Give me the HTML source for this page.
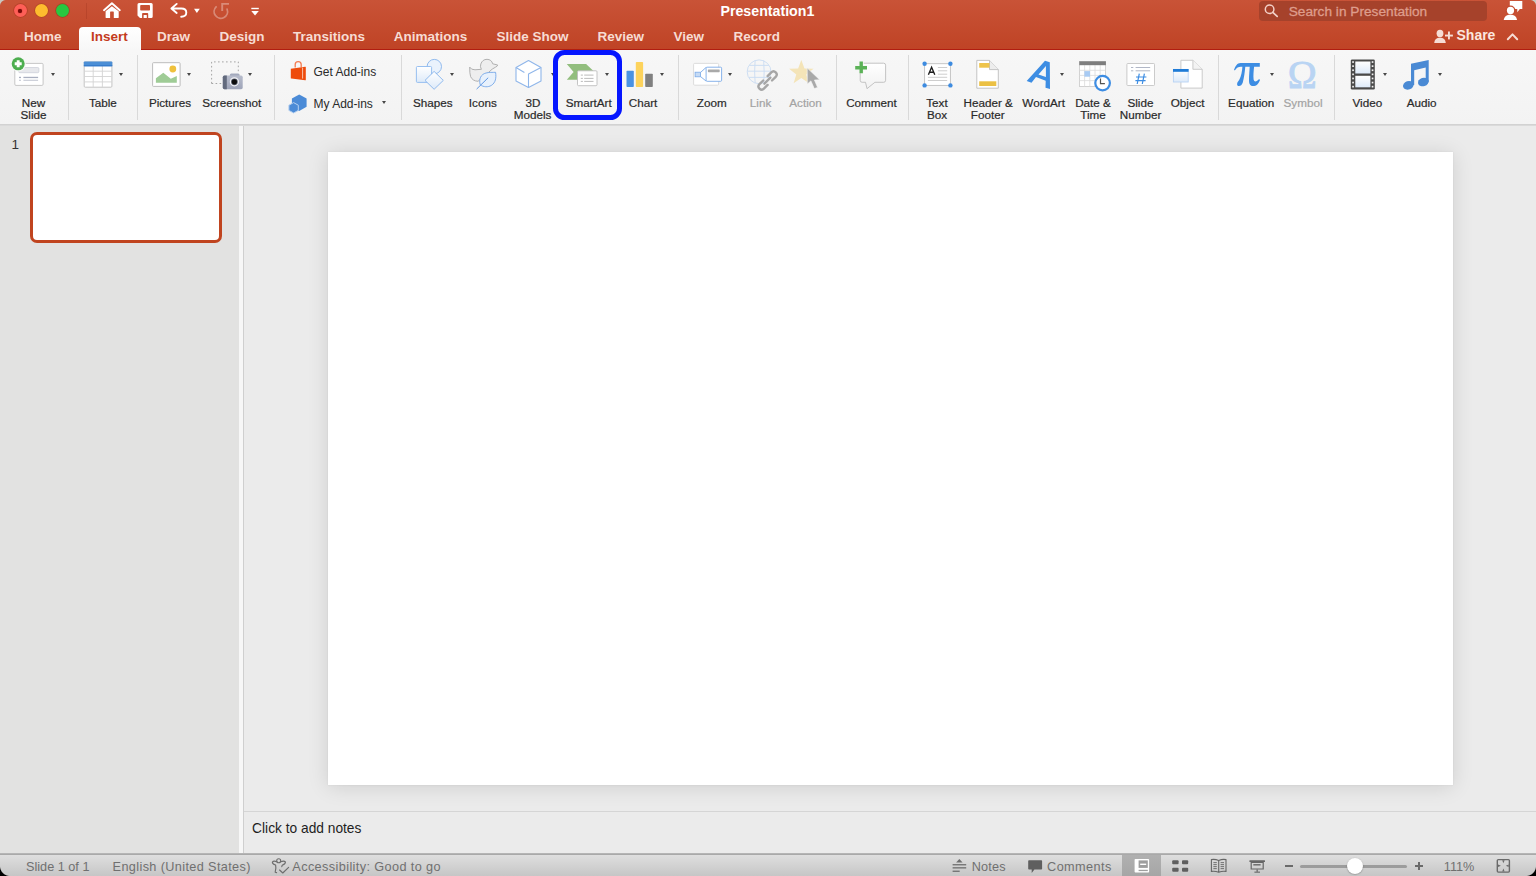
<!DOCTYPE html>
<html><head><meta charset="utf-8">
<style>
*{margin:0;padding:0;box-sizing:border-box}
html,body{width:1536px;height:876px;overflow:hidden;background:#EBEBEB;font-family:"Liberation Sans",sans-serif}
.abs{position:absolute}
#title{left:0;top:0;width:1536px;height:50px;background:linear-gradient(#C95337,#BF4325);}
#title .line{left:0;top:49px;width:1536px;height:1px;background:#B11D10}
.tab{position:absolute;top:29.6px;font-size:13.5px;font-weight:bold;line-height:13.5px;color:#F7DCD3;white-space:nowrap}
#ribbon{left:0;top:50px;width:1536px;height:75px;background:linear-gradient(#F7F7F7,#F3F3F3)}
.lbl{position:absolute;font-size:11.7px;line-height:11.7px;color:#2A2A2A;-webkit-text-stroke:0.2px currentColor;white-space:nowrap;transform:translateX(-50%)}
.dis{color:#A3A3A3}
.sep{position:absolute;top:55px;width:1px;height:65px;background:#D9D9D9}
.dd{position:absolute;top:72.6px;width:0;height:0;border-left:2.6px solid transparent;border-right:2.6px solid transparent;border-top:3.8px solid #474747}
.st{position:absolute;top:861px;font-size:12.7px;line-height:12.7px;color:#707070;white-space:nowrap}
svg{position:absolute;overflow:visible}
</style></head>
<body>
<!-- TITLE BAR -->
<div id="title" class="abs">
  <div class="abs line"></div>
</div>
<!-- window corner top-left -->
<div class="abs" style="left:0;top:0;width:6px;height:6px;background:radial-gradient(circle at 6px 6px,transparent 5.5px,#C9C7C0 6.5px)"></div>
<div class="abs" style="left:1530px;top:0;width:6px;height:6px;background:radial-gradient(circle at 0 6px,transparent 5.5px,#C9C7C0 6.5px)"></div>
<!-- traffic lights -->
<div class="abs" style="left:13.8px;top:4px;width:13px;height:13px;border-radius:50%;background:#FE5F57;box-shadow:0 0 0 0.7px rgba(150,40,20,0.45)"></div>
<div class="abs" style="left:18.3px;top:8.5px;width:4px;height:4px;border-radius:50%;background:#7A0A08;box-shadow:0 0 1px #7A0A08"></div>
<div class="abs" style="left:35.2px;top:4px;width:13px;height:13px;border-radius:50%;background:#FEBC2E;box-shadow:0 0 0 0.7px rgba(150,60,20,0.45)"></div>
<div class="abs" style="left:56.3px;top:4px;width:13px;height:13px;border-radius:50%;background:#28C840;box-shadow:0 0 0 0.7px rgba(100,60,20,0.45)"></div>
<div class="abs" style="left:86px;top:3px;width:1px;height:16px;background:rgba(120,30,10,0.18)"></div>

<div class="abs" style="left:720.5px;top:3.5px;font-size:14.2px;font-weight:bold;line-height:14.2px;color:#FFF;white-space:nowrap">Presentation1</div>

<!-- search -->
<div class="abs" style="left:1259px;top:1px;width:228px;height:19.5px;border-radius:4px;background:#A6422B"></div>
<div class="abs" style="left:1288.7px;top:5px;font-size:13.7px;line-height:13.7px;color:#DE9D8C;-webkit-text-stroke:0.3px currentColor;white-space:nowrap">Search in Presentation</div>

<!-- tabs -->
<div class="abs" style="left:79px;top:27px;width:62px;height:23px;border-radius:4px 4px 0 0;background:linear-gradient(#FFFFFF,#F7F7F7)"></div>
<div class="tab" style="left:24px">Home</div>
<div class="tab" style="left:91px;color:#C43B1D">Insert</div>
<div class="tab" style="left:157px">Draw</div>
<div class="tab" style="left:219.6px">Design</div>
<div class="tab" style="left:292.9px">Transitions</div>
<div class="tab" style="left:393.8px">Animations</div>
<div class="tab" style="left:496.5px">Slide Show</div>
<div class="tab" style="left:597.5px">Review</div>
<div class="tab" style="left:673.4px">View</div>
<div class="tab" style="left:733.6px">Record</div>
<div class="tab" style="left:1456.5px;top:28.4px;font-size:14px;line-height:14px;color:#FBE6DF">Share</div>

<!-- RIBBON -->
<div id="ribbon" class="abs"></div>
<div class="abs" style="left:0;top:124px;width:1536px;height:1px;background:#D2D2D2"></div>
<div class="abs" style="left:0;top:125px;width:1536px;height:1px;background:#DADADA"></div>

<div class="sep" style="left:68px"></div>
<div class="sep" style="left:136.5px"></div>
<div class="sep" style="left:273.5px"></div>
<div class="sep" style="left:400.5px"></div>
<div class="sep" style="left:677.5px"></div>
<div class="sep" style="left:835.5px"></div>
<div class="sep" style="left:908px"></div>
<div class="sep" style="left:1217.5px"></div>
<div class="sep" style="left:1334px"></div>

<!-- labels line1 top 96.6, line2 top 108.9 -->
<div class="lbl" style="left:33.5px;top:96.6px">New</div>
<div class="lbl" style="left:33.5px;top:109.3px">Slide</div>
<div class="lbl" style="left:102.9px;top:96.6px">Table</div>
<div class="lbl" style="left:170px;top:96.6px">Pictures</div>
<div class="lbl" style="left:231.7px;top:96.6px">Screenshot</div>
<div class="abs" style="left:313.5px;top:65.6px;font-size:12px;line-height:12px;color:#2A2A2A;white-space:nowrap">Get Add-ins</div>
<div class="abs" style="left:313.5px;top:97.8px;font-size:12px;line-height:12px;color:#2A2A2A;white-space:nowrap">My Add-ins</div>
<div class="lbl" style="left:432.8px;top:96.6px">Shapes</div>
<div class="lbl" style="left:482.8px;top:96.6px">Icons</div>
<div class="lbl" style="left:533px;top:96.6px">3D</div>
<div class="lbl" style="left:532.6px;top:109.3px">Models</div>
<div class="lbl" style="left:588.7px;top:96.6px">SmartArt</div>
<div class="lbl" style="left:643px;top:96.6px">Chart</div>
<div class="lbl" style="left:711.7px;top:96.6px">Zoom</div>
<div class="lbl dis" style="left:760.6px;top:96.6px">Link</div>
<div class="lbl dis" style="left:805.5px;top:96.6px">Action</div>
<div class="lbl" style="left:871.5px;top:96.6px">Comment</div>
<div class="lbl" style="left:937px;top:96.6px">Text</div>
<div class="lbl" style="left:937px;top:109.3px">Box</div>
<div class="lbl" style="left:988.2px;top:96.6px">Header &amp;</div>
<div class="lbl" style="left:987.7px;top:109.3px">Footer</div>
<div class="lbl" style="left:1043.7px;top:96.6px">WordArt</div>
<div class="lbl" style="left:1093px;top:96.6px">Date &amp;</div>
<div class="lbl" style="left:1093px;top:109.3px">Time</div>
<div class="lbl" style="left:1140.4px;top:96.6px">Slide</div>
<div class="lbl" style="left:1140.6px;top:109.3px">Number</div>
<div class="lbl" style="left:1187.6px;top:96.6px">Object</div>
<div class="lbl" style="left:1251.2px;top:96.6px">Equation</div>
<div class="lbl dis" style="left:1303px;top:96.6px">Symbol</div>
<div class="lbl" style="left:1367.3px;top:96.6px">Video</div>
<div class="lbl" style="left:1421.6px;top:96.6px">Audio</div>

<!-- dropdown arrows -->
<div class="dd" style="left:51.4px"></div>
<div class="dd" style="left:118.5px"></div>
<div class="dd" style="left:187px"></div>
<div class="dd" style="left:248px"></div>
<div class="dd" style="left:382px;top:101px"></div>
<div class="dd" style="left:450px"></div>
<div class="dd" style="left:604.5px"></div>
<div class="dd" style="left:659.7px"></div>
<div class="dd" style="left:728.3px"></div>
<div class="dd" style="left:1059.7px"></div>
<div class="dd" style="left:1269.9px"></div>
<div class="dd" style="left:1383.3px"></div>
<div class="dd" style="left:1437.9px"></div>

<!-- SmartArt highlight -->
<div class="dd" style="left:551.3px;top:72.6px"></div>
<div class="abs" style="left:553px;top:50px;width:69.4px;height:70.2px;border:5.6px solid #0516FF;border-radius:11.5px"></div>

<!-- LEFT PANEL -->
<div class="abs" style="left:0;top:126px;width:239px;height:728px;background:#E2E2E1"></div>
<div class="abs" style="left:239px;top:126px;width:4px;height:728px;background:#F7F7F7"></div>
<div class="abs" style="left:243px;top:126px;width:1px;height:728px;background:#CFCFCF"></div>
<div class="abs" style="left:11.5px;top:138px;font-size:13.5px;line-height:13.5px;color:#333">1</div>
<div class="abs" style="left:30px;top:132px;width:192px;height:111px;border:3.3px solid #C0441F;border-radius:7px;background:#FFF"></div>

<!-- MAIN SLIDE -->
<div class="abs" style="left:328px;top:152px;width:1125px;height:633px;background:#FFF;box-shadow:0 2px 20px rgba(0,0,0,0.12),0 0 2px rgba(0,0,0,0.07)"></div>

<!-- NOTES -->
<div class="abs" style="left:244px;top:811px;width:1292px;height:1px;background:#D5D5D5"></div>
<div class="abs" style="left:252.1px;top:822.2px;font-size:13.75px;line-height:13.75px;color:#1E1E1E;white-space:nowrap">Click to add notes</div>

<!-- STATUS BAR -->
<div class="abs" style="left:0;top:853px;width:1536px;height:23px;background:linear-gradient(#D2D2D2 0px,#A9A9A9 0.7px,#A9A9A9 1.9px,#DEDEDE 2.3px,#C6C6C6 23px)"></div>
<div class="st" style="left:26px">Slide 1 of 1</div>
<div class="st" style="left:112.6px;letter-spacing:0.37px">English (United States)</div>
<div class="st" style="left:292.3px;letter-spacing:0.39px">Accessibility: Good to go</div>
<div class="st" style="left:971.7px;letter-spacing:0.2px">Notes</div>
<div class="st" style="left:1047.1px;letter-spacing:0.4px">Comments</div>
<div class="abs" style="left:1122.3px;top:855px;width:39px;height:21px;background:linear-gradient(#B0B0B0,#A6A6A6)"></div>
<div class="st" style="left:1443.8px">111%</div>
<!-- slider -->
<div class="abs" style="left:1300.4px;top:864.5px;width:106.6px;height:3.8px;border-radius:2px;background:#9C9C9C"></div>
<div class="abs" style="left:1346.8px;top:857.8px;width:16.4px;height:16.4px;border-radius:50%;background:#FFF;box-shadow:0 0.5px 1.5px rgba(0,0,0,0.35)"></div>
<div class="abs" style="left:1284.5px;top:865px;width:8.5px;height:2.2px;background:#6A6A6A"></div>
<div class="abs" style="left:1414.7px;top:865px;width:8.5px;height:2.2px;background:#6A6A6A"></div>
<div class="abs" style="left:1417.9px;top:861.8px;width:2.2px;height:8.5px;background:#6A6A6A"></div>
<!-- bottom corners -->
<div class="abs" style="left:0;top:866px;width:10px;height:10px;background:radial-gradient(circle at 10px 0,transparent 9.5px,#000 10.5px)"></div>
<div class="abs" style="left:1526px;top:866px;width:10px;height:10px;background:radial-gradient(circle at 0 0,transparent 9.5px,#000 10.5px)"></div>


<svg width="1536" height="876" viewBox="0 0 1536 876" style="left:0;top:0">
<!-- ===== TITLE BAR ICONS ===== -->
<g fill="#FFF" stroke="none">
  <!-- home -->
  <path d="M104 10.2 L111.9 3.2 L119.8 10.2" fill="none" stroke="#FFF" stroke-width="1.9" stroke-linecap="round" stroke-linejoin="round"/>
  <path d="M105.6 11.3 L111.9 6.2 L118.7 11.3 L118.7 17.6 Q118.7 18 118.3 18 L113.8 18 L113.8 12.2 Q113.8 11.6 113.2 11.6 L110.7 11.6 Q110.1 11.6 110.1 12.2 L110.1 18 L106 18 Q105.6 18 105.6 17.6 Z"/>
  <!-- save -->
  <path fill-rule="evenodd" d="M139 2.9 L151.2 2.9 Q152.7 2.9 152.7 4.4 L152.7 16.5 Q152.7 18 151.2 18 L140 18 L137.5 15.5 L137.5 4.4 Q137.5 2.9 139 2.9 Z M141 5.1 Q140.2 5.1 140.2 5.9 L140.2 9.7 Q140.2 10.5 141 10.5 L149.2 10.5 Q150 10.5 150 9.7 L150 5.9 Q150 5.1 149.2 5.1 Z M142.9 12.9 Q142.1 12.9 142.1 13.7 L142.1 18 L143.6 18 L143.6 15.3 Q143.6 14.9 144 14.9 L146.4 14.9 Q146.8 14.9 146.8 15.3 L146.8 18 L148.2 18 L148.2 13.7 Q148.2 12.9 147.4 12.9 Z"/>
  <!-- undo -->
  <path d="M176.7 3.9 L171.4 8.5 L176.7 13 M171.6 8.5 L181.3 8.5 Q186.3 8.5 186.3 12.6 Q186.3 16.8 181.2 16.8" fill="none" stroke="#FFF" stroke-width="1.9" stroke-linecap="round" stroke-linejoin="round"/>
  <path d="M194 8.8 L199.8 8.8 L196.9 13 Z"/>
  <!-- redo faded -->
  <g opacity="0.33">
    <path d="M216.1 6.8 A6.7 6.7 0 1 0 227.1 9.2" fill="none" stroke="#FFF" stroke-width="1.8" stroke-linecap="round"/>
    <path d="M222.2 11 L222.2 3.9 L229 3.9" fill="none" stroke="#FFF" stroke-width="1.9" stroke-linejoin="miter"/>
  </g>
  <!-- customize -->
  <rect x="251.3" y="7.8" width="7.5" height="1.4"/>
  <path d="M251.3 11 L258.8 11 L255.05 15.6 Z"/>
</g>
<!-- search magnifier -->
<circle cx="1269.6" cy="9.2" r="4.3" fill="none" stroke="#F3D1C8" stroke-width="1.5"/>
<path d="M1272.8 12.4 L1277.2 16.4" stroke="#F3D1C8" stroke-width="1.7" stroke-linecap="round"/>
<!-- person comment -->
<g fill="#FFF">
  <path d="M1509.8 1.1 L1522.3 1.1 L1522.3 9 L1519.8 9 L1517.3 12.2 L1517.3 9 L1509.8 9 Z"/>
  <circle cx="1510.5" cy="10.4" r="4.9" fill="#C44B2E"/>
  <circle cx="1510.5" cy="10.4" r="3.6"/>
  <path d="M1503.7 20 Q1504.5 14.6 1510.4 14.4 Q1516.3 14.6 1517.1 20 Z"/>
</g>
<!-- share person + -->
<g fill="#F6DDD5">
  <ellipse cx="1440" cy="33.4" rx="3.4" ry="3.6"/>
  <path d="M1434.2 43 Q1434.6 37.6 1440 37.4 Q1445.4 37.6 1445.8 43 Z"/>
  <rect x="1445" y="34.6" width="7.9" height="1.9"/>
  <rect x="1448" y="31.5" width="1.9" height="7.9"/>
</g>
<path d="M1507.8 39.2 L1512.5 34.4 L1517.2 39.2" fill="none" stroke="#F6DDD5" stroke-width="2" stroke-linecap="round" stroke-linejoin="round"/>
</svg>


<svg width="1536" height="876" viewBox="0 0 1536 876" style="left:0;top:0">
<defs>
  <linearGradient id="gW" x1="0" y1="0" x2="0" y2="1"><stop offset="0" stop-color="#FFFFFF"/><stop offset="1" stop-color="#F1F1F1"/></linearGradient>
  <linearGradient id="gB" x1="0" y1="0" x2="0" y2="1"><stop offset="0" stop-color="#FFFFFF"/><stop offset="1" stop-color="#DDEAF9"/></linearGradient>
</defs>
<!-- New Slide -->
<rect x="14.8" y="63.4" width="28.3" height="22" rx="1.2" fill="#FFF" stroke="#C6C6C6" stroke-width="1"/>
<rect x="18.6" y="67.5" width="20.3" height="5.2" rx="1.2" fill="#E7E8EC" stroke="#C9CCD6" stroke-width="0.7"/>
<rect x="19" y="76.8" width="2" height="1.3" fill="#A9AFC0"/>
<rect x="23.4" y="76.8" width="14.7" height="1.3" fill="#A9AFC0"/>
<rect x="19" y="79.7" width="2" height="1.2" fill="#C9CDD6"/>
<rect x="23.4" y="79.7" width="14.7" height="1.2" fill="#C9CDD6"/>
<circle cx="18.2" cy="63.8" r="7.6" fill="#F6F6F6"/>
<circle cx="18.2" cy="63.8" r="6.5" fill="#4DAE4F"/>
<path d="M18.2 60.3 L18.2 67.3 M14.7 63.8 L21.7 63.8" stroke="#FFF" stroke-width="2.9"/>
<!-- Table -->
<rect x="84.2" y="61.9" width="27.7" height="25.3" rx="1" fill="#FFF" stroke="#BEBEBE" stroke-width="0.9"/>
<path d="M84.2 71.2 H111.9 M84.2 76.5 H111.9 M84.2 81.9 H111.9 M93.2 66 V87.2 M102.4 66 V87.2" stroke="#D4D4D4" stroke-width="0.9"/>
<rect x="83.8" y="61.5" width="28.5" height="4.8" rx="0.8" fill="#4C8FD6"/>
<rect x="83.8" y="65.3" width="28.5" height="1" fill="#2F74C6"/>
<!-- Pictures -->
<rect x="152.6" y="62.7" width="27.5" height="23.7" rx="0.8" fill="#FFF" stroke="#BDBDBD" stroke-width="1"/>
<circle cx="172.8" cy="69" r="3.4" fill="#EFC13C"/>
<path d="M155.9 82.8 L155.9 78.3 L163.3 72.7 L170.8 78.7 L176.8 76.1 L176.8 82.8 Z" fill="#9FCC96"/>
<!-- Screenshot -->
<path d="M211.6 83.5 L211.6 61.9 L238.3 61.9 L238.3 73" fill="none" stroke="#9C9C9C" stroke-width="0.9" stroke-dasharray="1.6 2.4"/>
<path d="M211.6 83.5 L222 83.5" fill="none" stroke="#9C9C9C" stroke-width="0.9" stroke-dasharray="1.6 2.4"/>
<rect x="229.8" y="73.4" width="9.8" height="4" rx="1.5" fill="#A3A9BC"/>
<linearGradient id="gCam" x1="0" y1="0" x2="0" y2="1"><stop offset="0" stop-color="#B7BCCC"/><stop offset="1" stop-color="#9EA4B8"/></linearGradient><rect x="222.8" y="75.6" width="19.9" height="13.6" rx="1.6" fill="url(#gCam)"/>
<path d="M224.4 75.6 L226.8 75.6 L226.8 89.2 L224.4 89.2 Q222.8 89.2 222.8 87.6 L222.8 77.2 Q222.8 75.6 224.4 75.6 Z" fill="#626A7D"/>
<circle cx="234.4" cy="81.8" r="4.6" fill="#F4F4F6"/>
<circle cx="234.4" cy="81.8" r="3.4" fill="#5C6272"/>
<circle cx="234.4" cy="81.8" r="2.6" fill="#0C0C0C"/>
<!-- Get Add-ins bag -->
<path d="M295.2 67.6 L295.2 64.6 A3 3 0 0 1 301.2 64.6 L301.2 67.2" fill="none" stroke="#F47B50" stroke-width="1.3"/>
<path d="M290.8 68.7 L305.2 66.7 Q305.8 66.6 305.8 67.3 L305.8 79.8 Q305.8 80.4 305.2 80.3 L291.4 78.6 Q290.8 78.5 290.8 77.9 Z" fill="#EE4B0C"/>
<rect x="302" y="67.6" width="1.1" height="11" fill="#F6B69B"/>
<!-- My Add-ins -->
<path d="M299.2 94.4 L306.6 98.5 L306.6 106.8 L299.2 110.9 L291.9 106.8 L291.9 98.5 Z" fill="#4B8BD7"/>
<path d="M293.6 102.6 L298.3 105.2 L298.3 110.4 L293.6 113 L288.9 110.4 L288.9 105.2 Z" fill="#4B8BD7" stroke="#B7D1F0" stroke-width="1"/>
<!-- Shapes -->
<circle cx="434.3" cy="66.6" r="7.2" fill="#EAF2FC" stroke="#86B3EC" stroke-width="0.9"/>
<rect x="416.4" y="66.5" width="15.2" height="15.9" rx="1" fill="url(#gB)" stroke="#8DB9EE" stroke-width="0.9"/>
<path d="M434.1 71.4 L443.3 80.4 L434.1 89.3 L425 80.4 Z" fill="url(#gB)" stroke="#86B3EC" stroke-width="0.9" stroke-linejoin="round"/>
<!-- Icons: duck + leaf -->
<path d="M469.7 67.1 Q471 69.8 475 69.8 L481.4 69.3 Q479.8 66.8 480.8 64 Q482.4 59.4 487 59.3 Q491.6 59.5 492.7 63.8 L497.7 65 Q497.2 66.6 495.6 67.1 Q492 68.8 489 72 L478 81.3 Q472.6 81 470.6 76.6 Q469.6 73.6 469.7 67.1 Z" fill="#EEEEEE" stroke="#A9A9A9" stroke-width="0.9" stroke-linejoin="round"/>
<path d="M480.2 84.8 C478.6 79 481 74.2 486 73 C489 72.2 492.6 72.4 495.6 72.3 C496.4 78 495.6 82.6 491.4 85.4 C488 87.4 483.6 87.2 480.2 84.8 Z" fill="#E8F1FC" stroke="#74A6E8" stroke-width="0.9" stroke-linejoin="round"/>
<path d="M476.9 88.8 L487.9 78" stroke="#5E97E3" stroke-width="1" stroke-linecap="round"/>
<!-- 3D Models cube -->
<path d="M528.5 60.6 L541 67.5 L541 81 L528.5 87.5 L516 81 L516 67.5 Z" fill="#FFF" stroke="#8FB6EA" stroke-width="1.1" stroke-linejoin="round"/>
<path d="M541 67.5 L528.5 73.9 L528.5 87.5 M516 67.5 L524.4 72.4" fill="none" stroke="#8FB6EA" stroke-width="1.1" stroke-linejoin="round"/>
<!-- SmartArt -->
<path d="M566.8 64 L586.1 64 L594 71.5 L586.1 79.8 L566.8 79.8 L573.6 71.9 Z" fill="#92BE7E"/>
<rect x="577.5" y="70.8" width="19.5" height="14.9" rx="1" fill="#FFF" stroke="#BDBDBD" stroke-width="0.9"/>
<path d="M580.8 75.1 H582.9 M584.2 75.1 H593.5 M580.8 78.4 H582.9 M584.2 78.4 H593.5 M580.8 81.4 H582.9 M584.2 81.4 H593.5" stroke="#B3B3B3" stroke-width="0.9"/>
<!-- Chart -->
<rect x="626.5" y="70.8" width="7.3" height="16.3" rx="0.8" fill="#4A92E3"/>
<rect x="635.8" y="61.9" width="7.3" height="25.2" rx="0.8" fill="#FDD35C"/>
<rect x="645.2" y="73.7" width="7.6" height="13.4" rx="0.8" fill="#808080"/>
<!-- Zoom -->
<rect x="693.6" y="63.4" width="25" height="21.8" rx="1" fill="#FFF" stroke="#D9D9D9" stroke-width="0.9"/>
<path d="M700.6 72.4 L706.1 67.4 M700.6 76.6 L706.1 81.1" stroke="#7AAAE8" stroke-width="0.9"/>
<rect x="706.1" y="67.2" width="15.5" height="14.1" rx="1" fill="#FFF" stroke="#7AAAE8" stroke-width="0.9"/>
<rect x="707.9" y="69.5" width="11.8" height="2.7" rx="0.6" fill="#A9A9A9"/>
<rect x="695.1" y="72.2" width="5.5" height="4.6" fill="#C6DBF5" stroke="#7AAAE8" stroke-width="0.8"/>
<!-- Link (disabled) -->
<g fill="none" stroke="#C9DBF2" stroke-width="0.9">
  <circle cx="759.1" cy="71.8" r="11.9"/>
  <path d="M755.1 60.6 Q754.2 71.8 755.1 83 M763.7 60.6 Q764.6 71.8 763.7 83 M747.3 71.2 H770.9 M749.4 65.4 H768.8 M749 77.4 H769.2"/>
</g>
<g fill="none" stroke="#A6A6A6" stroke-width="2.4" stroke-linecap="round" transform="translate(-2 1)">
  <path d="M765.2 79.5 L761.5 83.2 Q759.3 85.4 761.5 87.6 Q763.7 89.8 765.9 87.6 L769.6 83.9"/>
  <path d="M769.6 75.1 L773.3 71.4 Q775.5 69.2 777.7 71.4 Q779.9 73.6 777.7 75.8 L774 79.5"/>
  <path d="M766.4 82.7 L772.4 76.7"/>
</g>
<!-- Action (disabled) -->
<path d="M801.3 59.9 L804.5 68.6 L813.5 68.8 L806.3 74.4 L809 83.2 L801.3 78 L793.6 83.2 L796.3 74.4 L789.1 68.8 L798.1 68.6 Z" fill="#F4E4B8"/>
<path d="M807.2 67.9 L807.3 84 L810.9 80.9 L814.3 88.6 L817.6 87.4 L814.4 80 L819.6 79.8 Z" fill="#A9A9A9" stroke="#F6F6F6" stroke-width="0.6" stroke-linejoin="round"/>
<!-- Comment -->
<path d="M862.6 63.2 L883.6 63.2 Q885.6 63.2 885.6 65.2 L885.6 80.3 Q885.6 82.3 883.6 82.3 L874.9 82.3 L867 88.7 L865.5 82.3 L862.2 82.3 Q860.2 82.3 860.2 80.3 L860.2 65.6" fill="url(#gW)" stroke="#BDBDBD" stroke-width="0.9" stroke-linejoin="round"/>
<path d="M861.2 61.5 V73.3 M855.2 67.8 H867" stroke="#F6F6F6" stroke-width="5"/>
<path d="M861.2 61.5 V73.3 M855.2 67.8 H867" stroke="#5BB257" stroke-width="3.4"/>
<!-- Text Box -->
<rect x="924.6" y="63.7" width="25.8" height="21.7" fill="#FFF" stroke="#C0C0C0" stroke-width="0.9"/>
<path d="M928.4 74.8 L931.6 67.2 L934.8 74.8 M929.6 72.2 H933.6" fill="none" stroke="#1E1E1E" stroke-width="1.35"/>
<path d="M937.9 67.5 H947.2 M937.9 70.8 H947.2 M937.9 74.2 H947.2 M927.9 77.3 H947.2 M927.9 80.5 H947.2" stroke="#C8C8C8" stroke-width="0.9"/>
<g fill="#3D8BE0"><circle cx="924.6" cy="63.7" r="2.2"/><circle cx="950.4" cy="63.7" r="2.2"/><circle cx="924.6" cy="85.4" r="2.2"/><circle cx="950.4" cy="85.4" r="2.2"/></g>
<!-- Header & Footer -->
<path d="M976.8 60.4 L989.5 60.4 L998.3 69.6 L998.3 88.2 L976.8 88.2 Z" fill="#FFF" stroke="#BDBDBD" stroke-width="0.9" stroke-linejoin="round"/>
<path d="M989.5 60.4 L989.5 69.6 L998.3 69.6" fill="#EDEDED" stroke="#BDBDBD" stroke-width="0.9" stroke-linejoin="round"/>
<rect x="979.2" y="63" width="10.3" height="4.7" fill="#EEC44C"/>
<rect x="979.2" y="81.3" width="17.1" height="4.7" fill="#EBC044"/>
<!-- WordArt -->
<path fill-rule="evenodd" d="M1026.7 81.1 L1045 60.7 L1049.8 62.2 L1050 88.9 L1045.5 87.7 L1045.7 80.7 L1036 77 L1031.5 82.7 Z M1045.9 65.9 L1038.5 74.5 L1045.9 77 Z" fill="#3D8DE3"/>
<!-- Date & Time -->
<rect x="1079.6" y="61.5" width="26" height="25" fill="#FFF" stroke="#C8C8C8" stroke-width="0.8"/>
<path d="M1084.6 65.2 V86.5 M1089.8 65.2 V86.5 M1095 65.2 V86.5 M1100.2 65.2 V86.5 M1079.6 70.3 H1105.6 M1079.6 75.4 H1105.6 M1079.6 80.6 H1105.6" stroke="#DADADA" stroke-width="0.8"/>
<rect x="1079.3" y="61.3" width="26.6" height="3.9" fill="#7E7E7E"/>
<rect x="1084.4" y="71.1" width="5.6" height="5.6" fill="#A9CBF3"/>
<circle cx="1102.6" cy="83.1" r="7.3" fill="#FFF" stroke="#3D8DE3" stroke-width="2.2"/>
<path d="M1100.5 78.4 V83.6 H1104.9" fill="none" stroke="#555" stroke-width="1.2"/>
<!-- Slide Number -->
<rect x="1126.9" y="63.5" width="27.6" height="22" rx="0.8" fill="#FFF" stroke="#C5C5C5" stroke-width="0.9"/>
<path d="M1131 67.5 H1133.3 M1135.6 67.5 H1150.2 M1131 70.8 H1133.3 M1135.6 70.8 H1150.2" stroke="#A8AFC0" stroke-width="0.9"/>
<path d="M1139.3 73.6 L1137.2 84 M1144.4 73.6 L1142.3 84 M1136 77 H1146.4 M1135.4 80.6 H1145.6" stroke="#3D8DE3" stroke-width="1.2"/>
<!-- Object -->
<path d="M1180.9 60.3 L1192.9 60.3 L1202.2 69.3 L1202.2 88.1 L1180.9 88.1 Z" fill="#FFF" stroke="#C5C5C5" stroke-width="0.9" stroke-linejoin="round"/>
<path d="M1192.9 60.3 L1192.9 69.3 L1202.2 69.3" fill="#F3F3F3" stroke="#C5C5C5" stroke-width="0.9" stroke-linejoin="round"/>
<rect x="1173.4" y="69.4" width="14.8" height="12.6" fill="url(#gB)" stroke="#B9D3F3" stroke-width="0.9"/>
<rect x="1173" y="69" width="15.6" height="2.8" fill="#1F7BD6"/>
<!-- Equation pi -->
<path d="M1234 69.7 C1235.6 65.8 1237.2 62.9 1240.5 62.9 L1259.8 62.9 L1259.8 66.8 L1254.1 66.8 C1253.6 71 1253.2 76 1253.6 79.6 C1254 81.6 1255.6 81.8 1256.8 81 C1257.8 80.4 1258.6 79.6 1259.1 79 L1260 79.9 C1258.6 83.4 1256.6 86.1 1253 86.1 C1249.8 86.1 1249 83.4 1249 80 C1249 75.6 1249.5 70.6 1249.7 66.8 L1245.3 66.8 C1244.8 72 1244 78 1242.8 82.6 C1242 85 1240.6 86.1 1239 86.1 C1237.6 86.1 1237 85.2 1237.1 84 C1237.2 82.6 1238.4 81.2 1239.4 79.6 C1241.2 76.4 1242.2 71 1242.4 66.8 L1240.8 66.8 C1238.4 66.8 1236.6 67.8 1234.8 70.4 Z" fill="#3D8DE3"/>
<!-- Symbol omega (disabled) -->
<text x="1302.2" y="88.3" text-anchor="middle" font-family="Liberation Serif" font-size="39" fill="#B9D4F3" stroke="#B9D4F3" stroke-width="0.9">Ω</text>
<!-- Video film -->
<rect x="1350.8" y="59.4" width="24" height="30.1" rx="1.3" fill="#4A4A4A"/>
<rect x="1355.3" y="61.5" width="15.1" height="12" fill="url(#gB)"/>
<rect x="1355.3" y="75.8" width="15.1" height="11.5" fill="url(#gB)"/>
<g fill="#F2F2F2">
  <rect x="1352.2" y="61.2" width="1.7" height="1.7"/><rect x="1352.2" y="65.3" width="1.7" height="1.7"/><rect x="1352.2" y="69.4" width="1.7" height="1.7"/><rect x="1352.2" y="73.5" width="1.7" height="1.7"/><rect x="1352.2" y="77.6" width="1.7" height="1.7"/><rect x="1352.2" y="81.7" width="1.7" height="1.7"/><rect x="1352.2" y="85.8" width="1.7" height="1.7"/>
  <rect x="1371.7" y="61.2" width="1.7" height="1.7"/><rect x="1371.7" y="65.3" width="1.7" height="1.7"/><rect x="1371.7" y="69.4" width="1.7" height="1.7"/><rect x="1371.7" y="73.5" width="1.7" height="1.7"/><rect x="1371.7" y="77.6" width="1.7" height="1.7"/><rect x="1371.7" y="81.7" width="1.7" height="1.7"/><rect x="1371.7" y="85.8" width="1.7" height="1.7"/>
</g>
<!-- Audio note -->
<path d="M1411 63.8 L1428.7 59.9 L1428.7 82.3 L1425.7 82.3 L1425.7 67.6 L1414.2 70.2 L1414.2 85 L1411 85 Z" fill="#4A8AD4"/>
<ellipse cx="1408.3" cy="85.3" rx="5.4" ry="4.2" transform="rotate(-18 1408.3 85.3)" fill="#4A8AD4"/>
<ellipse cx="1423.3" cy="82" rx="5.4" ry="4.2" transform="rotate(-18 1423.3 82)" fill="#4A8AD4"/>

<!-- ===== STATUS BAR ICONS ===== -->
<g fill="none" stroke="#6E6E6E" stroke-width="1.15" stroke-linecap="round" stroke-linejoin="round">
  <circle cx="278.7" cy="860.7" r="2"/>
  <path d="M276.8 861.7 Q273.6 860.4 272.4 862 Q272 863.8 275.6 865 Q276.4 868 275.2 872.2 L276.6 872.6"/>
  <path d="M280.6 861.7 Q284 860.4 285.4 861.8 Q285.8 863.6 282.2 865.2 L281.8 866.6"/>
  <path d="M279.6 870 L282.8 873 L288.6 867.3"/>
</g>
<g fill="#6E6E6E">
  <path d="M956.1 862.5 L962.6 862.5 L959.35 858.9 Z"/>
  <rect x="952.6" y="864.1" width="13.6" height="1.3"/>
  <rect x="952.6" y="867.2" width="13.6" height="1.3"/>
  <rect x="952.6" y="870.6" width="7.1" height="1.3"/>
  <path d="M1029 860.2 L1041.3 860.2 Q1042.1 860.2 1042.1 861 L1042.1 868.8 Q1042.1 869.6 1041.3 869.6 L1034.4 869.6 L1031.7 872.9 L1031.7 869.6 L1029 869.6 Q1028.2 869.6 1028.2 868.8 L1028.2 861 Q1028.2 860.2 1029 860.2 Z" fill="#5F5F5F"/>
</g>
<!-- normal view icon -->
<rect x="1134.6" y="858.9" width="14.5" height="13.7" rx="0.8" fill="#FFF"/>
<rect x="1138.6" y="860.4" width="9.2" height="7.5" fill="#9E9E9E"/>
<rect x="1140.2" y="863.6" width="6" height="1.4" fill="#FFF"/>
<rect x="1138.6" y="869.8" width="9.2" height="1.3" fill="#9E9E9E"/>
<!-- sorter -->
<g fill="#5F5F5F">
  <rect x="1172.2" y="860.3" width="6.4" height="4" rx="1"/><rect x="1182" y="860.3" width="6.2" height="4" rx="1"/>
  <rect x="1172.2" y="867.7" width="6.4" height="4.1" rx="1"/><rect x="1182" y="867.7" width="6.2" height="4.1" rx="1"/>
</g>
<!-- reading -->
<g fill="none" stroke="#666" stroke-width="1.1">
  <path d="M1218.7 860.4 Q1215 859 1211.4 859.6 L1211.4 871.4 Q1215 870.8 1218.7 872.2 Q1222.4 870.8 1226 871.4 L1226 859.6 Q1222.4 859 1218.7 860.4 Z M1218.7 860.4 V872.2"/>
  <path d="M1213.4 862.6 H1216.8 M1213.4 864.6 H1216.8 M1213.4 866.6 H1216.8 M1213.4 868.6 H1216.8 M1220.6 862.6 H1224 M1220.6 864.6 H1224 M1220.6 866.6 H1224 M1220.6 868.6 H1224" stroke-width="0.9"/>
</g>
<!-- slideshow -->
<g fill="#666">
  <rect x="1249.4" y="860.3" width="15.6" height="1.7" rx="0.5"/>
  <path d="M1250.6 862 H1263.8 V869.4 H1250.6 Z M1251.8 862.9 V868.4 H1262.6 V862.9 Z" fill-rule="evenodd"/>
  <rect x="1253.3" y="864.1" width="7.3" height="1.4"/>
  <rect x="1256.5" y="869.4" width="1.3" height="2.4"/>
  <rect x="1254.4" y="871.6" width="5.6" height="1.1"/>
</g>
<!-- fit -->
<rect x="1497.3" y="859.6" width="12.1" height="12.5" rx="1" fill="none" stroke="#6A6A6A" stroke-width="1.4"/>
<g fill="#6A6A6A">
  <path d="M1502.2 860.3 L1504.6 860.3 L1503.4 863.2 Z"/><path d="M1502.2 871.4 L1504.6 871.4 L1503.4 868.5 Z"/>
  <path d="M1498 864.6 L1498 867 L1500.9 865.8 Z"/><path d="M1508.7 864.6 L1508.7 867 L1505.8 865.8 Z"/>
</g>
</svg>

</body></html>
